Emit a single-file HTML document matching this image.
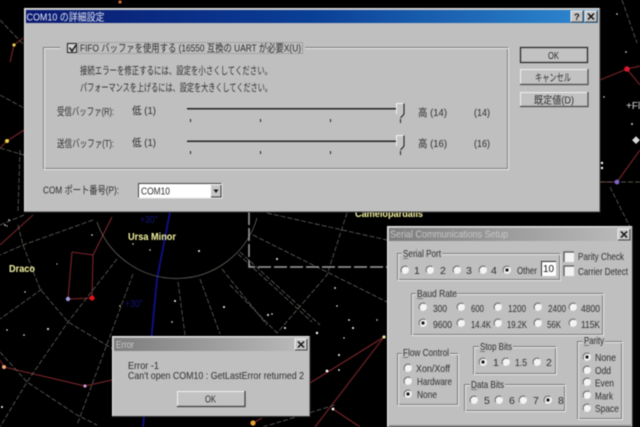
<!DOCTYPE html>
<html><head><meta charset="utf-8"><style>
html,body{margin:0;padding:0;background:#000;width:640px;height:427px;overflow:hidden}
svg{display:block;filter:blur(.45px)}
text{font-family:"Liberation Sans","Noto Sans CJK JP",sans-serif;font-size:10.5px;fill:#2e2e2e}
.l{fill:none;stroke:#7a242a;stroke-width:1.1}
.g{fill:none;stroke:#6e7068;stroke-width:.7;stroke-dasharray:5 2}
.y{fill:#f2f2a0;font-weight:bold;font-size:10.5px}
</style></head><body>
<svg width="640" height="427" viewBox="0 0 640 427" xmlns="http://www.w3.org/2000/svg">
<defs>
<linearGradient id="t1" x1="0" x2="1"><stop offset="0" stop-color="#0a1a70"/><stop offset=".5" stop-color="#0a3f96"/><stop offset="1" stop-color="#2f8ad0"/></linearGradient>
<linearGradient id="t2" x1="0" x2="1"><stop offset="0" stop-color="#7d7d7d"/><stop offset="1" stop-color="#bcbcbc"/></linearGradient>
<g id="r"><circle r="3.9" fill="#f4f4f4"/><path d="M-3.2 2.2A3.9 3.9 0 0 1 2.2-3.2" fill="none" stroke="#666" stroke-width="1.1"/></g>
<g id="rs"><circle r="3.9" fill="#f4f4f4"/><path d="M-3.2 2.2A3.9 3.9 0 0 1 2.2-3.2" fill="none" stroke="#666" stroke-width="1.1"/><circle r="1.6" fill="#111"/></g>
<g id="cb"><rect width="10" height="10" fill="#f2f2f2"/><path d="M0 10V0H10" fill="none" stroke="#555" stroke-width="1.3"/></g>
<g id="x"><rect width="12" height="11" fill="#c4c4c4"/><path d="M0 11V0H12" fill="none" stroke="#f2f2f2"/><path d="M0 11H12V0" fill="none" stroke="#444"/><path d="M3 2.5L9 8.5M9 2.5L3 8.5" stroke="#111" stroke-width="1.5"/></g>
<g id="th"><path d="M.5 .5H8V11L4.5 15L.5 11Z" fill="#c4c4c4"/><path d="M.5 11V.5H8" fill="none" stroke="#f2f2f2"/><path d="M8 .5V11L4.5 15" fill="none" stroke="#222" stroke-width="1.1"/></g>
</defs>
<rect width="640" height="427" fill="#000"/>
<g class="l">
<path d="M23 38L14 45L10 62M24 130L7 141L0 148M33 215L0 245M112 217L93 255M72 252L93 255L92 298L68 299L72 252"/>
<path d="M0 360L4 367L85 386L112 380M384 337L310 383M384 337L315 427M333 409L360 427M253 423L262 418"/>
<path d="M600 80L627 69L640 66M627 69L640 85M617 182L640 150M600 182L617 182"/>
</g>
<path d="M170 212L157 279L143 427" fill="none" stroke="#10108c" stroke-width="1.8"/>
<path d="M97 222A84 84 0 0 0 257 218" fill="none" stroke="#6e7068" stroke-width=".7"/>
<g class="g">
<path d="M117 259L68 322L27 382L0 427M133 274L77 425M178 282L185 335M200 279L220 334M222 269L267 325M238 254L312 322"/>
<path d="M18 225L23 245L40 289L68 322L113 349M93 220L23 245L0 255M42 289L0 319M0 352L27 382L77 415L97 425"/>
<path d="M253 235L387 302M267 213L387 240M347 213L327 275L277 333M230 285L277 333M240 252L320 325M622 0L637 43M610 187L630 227M600 182H640"/>
<path d="M0 20L24 45M0 95L24 108M0 148L24 155M20 150L18 212M24 215L0 225"/>
<path d="M263 427L335 405"/>
</g>
<path d="M249 212V267H388" fill="none" stroke="#a0a0a0" stroke-width="1.5" stroke-dasharray="13 3"/>
<g fill="#fff">
<circle cx="5" cy="225" r=".8"/><circle cx="92" cy="235" r=".8"/><circle cx="133" cy="244" r=".7"/><circle cx="150" cy="250" r=".7"/><circle cx="199" cy="251" r="1"/><circle cx="277" cy="259" r="1"/><circle cx="268" cy="315" r="1"/><circle cx="175" cy="301" r="1"/><circle cx="224" cy="307" r="1"/><circle cx="172" cy="322" r=".8"/><circle cx="48" cy="329" r="1"/><circle cx="7" cy="330" r=".8"/><circle cx="24" cy="335" r=".8"/><circle cx="25" cy="292" r=".7"/><circle cx="57" cy="264" r=".6"/><circle cx="335" cy="288" r=".9"/><circle cx="337" cy="306" r=".8"/><circle cx="272" cy="314" r=".8"/><circle cx="285" cy="328" r="1"/><circle cx="317" cy="333" r="1.2"/><circle cx="349" cy="320" r=".9"/><circle cx="353" cy="328" r="1"/><circle cx="377" cy="320" r=".7"/><circle cx="327" cy="371" r="1.4"/><circle cx="333" cy="409" r="1.4"/><circle cx="339" cy="370" r=".9"/><circle cx="2" cy="407" r="1"/><circle cx="339" cy="355" r="1"/><circle cx="344" cy="338" r=".7"/>
<circle cx="7" cy="226" r=".6"/><circle cx="617" cy="14" r=".8"/><circle cx="626" cy="52" r=".8"/><circle cx="604" cy="97" r=".7"/><circle cx="9" cy="220" r=".7"/><circle cx="602" cy="163" r="1.2"/><circle cx="602" cy="168" r="1.2"/><circle cx="632" cy="124" r=".9"/><circle cx="120" cy="306" r=".7"/>
</g>
<g fill="#f2d24a"><circle cx="14" cy="45" r="1.6"/><circle cx="7" cy="141" r="2"/></g>
<circle cx="120" cy="2" r="1.6" fill="#d8703a"/>
<circle cx="627" cy="69" r="2.8" fill="#d81830"/><circle cx="92" cy="298" r="2.6" fill="#e01020"/>
<circle cx="68" cy="299" r="2.2" fill="#9a9ae0"/><circle cx="617" cy="182" r="2.4" fill="#7a66c8"/>
<circle cx="4" cy="367" r="2" fill="#f0a878"/><circle cx="85" cy="386" r="1.6" fill="#c8a0d0"/>
<circle cx="253" cy="423" r="2.6" fill="#e8a030"/><circle cx="384" cy="337" r="1.6" fill="#f0e8a0"/>
<text x="9" y="272" class="y" textLength="26" lengthAdjust="spacingAndGlyphs">Draco</text>
<text x="128" y="240" class="y" textLength="48" lengthAdjust="spacingAndGlyphs">Ursa Minor</text>
<text x="355" y="217" class="y" textLength="68" lengthAdjust="spacingAndGlyphs">Camelopardalis</text>
<text x="140" y="223" style="fill:#14147c" textLength="18" lengthAdjust="spacingAndGlyphs">+30°</text>
<text x="125" y="307" style="fill:#14147c" textLength="18" lengthAdjust="spacingAndGlyphs">+30°</text>
<text x="626" y="109" style="fill:#d8d8d8;font-size:10px">+Fl</text>
<text x="632" y="143" style="fill:#d8d8d8;font-size:8px">◆l</text>

<rect x="24" y="8" width="576" height="204" fill="#bfbfbf"/>
<path d="M24.500 212V8.500H600" fill="none" stroke="#e4e4e4"/>
<path d="M24 212H600V8" fill="none" stroke="#3c3c3c"/>
<rect x="26" y="10" width="572" height="13" fill="url(#t1)"/>
<text x="26.500" y="20.500" style="fill:#e8e8f4" textLength="78" lengthAdjust="spacingAndGlyphs">COM10 の詳細設定</text>
<g transform="translate(571,11)"><rect width="12" height="11" fill="#c4c4c4"/><path d="M0 11V0H12" fill="none" stroke="#f2f2f2"/><path d="M0 11H12V0" fill="none" stroke="#444"/><text x="3" y="9" style="font-weight:bold;fill:#111;font-size:9.500px">?</text></g>
<use href="#x" x="585" y="11"/>
<rect x="43.500" y="47.500" width="464" height="121" fill="none" stroke="#7c7c7c"/>
<rect x="44.500" y="48.500" width="464" height="121" fill="none" stroke="#ececec"/>
<rect x="60" y="42" width="245" height="12" fill="#bfbfbf"/>
<rect x="67.500" y="43.500" width="9" height="9" fill="#d8d8d8" stroke="#333" stroke-width="1.200"/>
<path d="M69.500 47.500L72 51L76 45" fill="none" stroke="#111" stroke-width="1.500"/>
<rect x="78.500" y="42.500" width="224" height="11" fill="none" stroke="#555" stroke-width=".6" stroke-dasharray="1 1"/>
<text x="80" y="51.500" textLength="221" lengthAdjust="spacingAndGlyphs">FIFO バッファを使用する (16550 互換の UART が必要X(U)</text>
<text x="80" y="74" textLength="192" lengthAdjust="spacingAndGlyphs">接続エラーを修正するには、設定を小さくしてください。</text>
<text x="80" y="91" textLength="192" lengthAdjust="spacingAndGlyphs">パフォーマンスを上げるには、設定を大きくしてください。</text>
<text x="57" y="115" textLength="57" lengthAdjust="spacingAndGlyphs">受信バッファ(R):</text>
<text x="57" y="147" textLength="57" lengthAdjust="spacingAndGlyphs">送信バッファ(T):</text>
<text x="132" y="114" textLength="24" lengthAdjust="spacingAndGlyphs">低 (1)</text>
<text x="132" y="146" textLength="24" lengthAdjust="spacingAndGlyphs">低 (1)</text>
<g fill="#222">
<rect x="187" y="108" width="210" height="1.500"/><rect x="187" y="140.500" width="210" height="1.500"/>
<rect x="190" y="119" width="1" height="3"/><rect x="260" y="119" width="1" height="3"/><rect x="330" y="119" width="1" height="3"/><rect x="400" y="119" width="1" height="4"/>
<rect x="190" y="151" width="1" height="3"/><rect x="260" y="151" width="1" height="3"/><rect x="330" y="151" width="1" height="3"/><rect x="400" y="151" width="1" height="4"/>
</g>
<use href="#th" x="396" y="103"/><use href="#th" x="396" y="135"/>
<text x="418" y="116" textLength="29" lengthAdjust="spacingAndGlyphs">高 (14)</text>
<text x="474" y="116" textLength="16" lengthAdjust="spacingAndGlyphs">(14)</text>
<text x="418" y="147" textLength="29" lengthAdjust="spacingAndGlyphs">高 (16)</text>
<text x="474" y="147" textLength="16" lengthAdjust="spacingAndGlyphs">(16)</text>
<text x="43" y="193.500" textLength="76" lengthAdjust="spacingAndGlyphs">COM ポート番号(P):</text>
<rect x="138" y="183" width="84" height="15" fill="#fff"/>
<path d="M138.500 198V183.500H222" fill="none" stroke="#444"/>
<path d="M138 198H222V183" fill="none" stroke="#ececec"/>
<rect x="211" y="185" width="10" height="12" fill="#c4c4c4"/><path d="M211 197H221V185" fill="none" stroke="#333"/><path d="M213.500 189.500H218.500L216 193Z" fill="#111"/>
<text x="141" y="194.500" textLength="29" lengthAdjust="spacingAndGlyphs">COM10</text>
<rect x="520.500" y="47.500" width="67" height="15" fill="#c2c2c2" stroke="#222" stroke-width="1.200"/>
<text x="548" y="59" textLength="11" lengthAdjust="spacingAndGlyphs">OK</text>
<rect x="520" y="69" width="68" height="16" fill="#c2c2c2"/><path d="M520.500 85V69.500H588" fill="none" stroke="#f0f0f0"/><path d="M520 84.500H588V69" fill="none" stroke="#4a4a4a" stroke-width="1.200"/>
<text x="535" y="81" textLength="36" lengthAdjust="spacingAndGlyphs">キャンセル</text>
<rect x="520" y="92" width="68" height="15" fill="#c2c2c2"/><path d="M520.500 107V92.500H588" fill="none" stroke="#f0f0f0"/><path d="M520 106.500H588V92" fill="none" stroke="#4a4a4a" stroke-width="1.200"/>
<text x="534" y="103.500" textLength="40" lengthAdjust="spacingAndGlyphs">既定値(D)</text>

<rect x="112" y="336" width="198" height="81" fill="#bfbfbf"/>
<path d="M112.500 417V336.500H310" fill="none" stroke="#ececec"/>
<path d="M112 416.500H310V336" fill="none" stroke="#333"/>
<rect x="114" y="338" width="194" height="13" fill="url(#t2)"/>
<text x="116" y="348" style="fill:#c8c8c8" textLength="18" lengthAdjust="spacingAndGlyphs">Error</text>
<use href="#x" x="295" y="339"/>
<text x="128" y="369" textLength="31" lengthAdjust="spacingAndGlyphs">Error -1</text>
<text x="128" y="379" textLength="176" lengthAdjust="spacingAndGlyphs">Can't open COM10 : GetLastError returned 2</text>
<rect x="177" y="391" width="68" height="16" fill="#c2c2c2"/><path d="M177.500 407V391.500H245" fill="none" stroke="#f0f0f0"/><path d="M177 406.500H245V391" fill="none" stroke="#3c3c3c" stroke-width="1.200"/>
<text x="205" y="402.500" textLength="11" lengthAdjust="spacingAndGlyphs">OK</text>

<rect x="387" y="226" width="246" height="201" fill="#bfbfbf"/>
<path d="M387.500 427V226.500H633" fill="none" stroke="#ececec"/>
<path d="M632.500 226V427" stroke="#333"/>
<rect x="389" y="228" width="242" height="13" fill="url(#t2)"/>
<rect x="389" y="425" width="242" height="2" fill="#8c8c8c"/>
<text x="390" y="237.500" style="fill:#c8c8c8" textLength="118" lengthAdjust="spacingAndGlyphs">Serial Communications Setup</text>
<use href="#x" x="618" y="229"/>
<g fill="none" stroke="#7c7c7c">
<rect x="397.500" y="253.500" width="162" height="26"/><rect x="411.500" y="293.500" width="191" height="41"/><rect x="397.500" y="353.500" width="60" height="51"/><rect x="473.500" y="346.500" width="82" height="27"/><rect x="464.500" y="384.500" width="100" height="26"/><rect x="577.500" y="341.500" width="44" height="77"/>
</g>
<g fill="none" stroke="#e8e8e8">
<rect x="398.500" y="254.500" width="162" height="26"/><rect x="412.500" y="294.500" width="191" height="41"/><rect x="398.500" y="354.500" width="60" height="51"/><rect x="474.500" y="347.500" width="82" height="27"/><rect x="465.500" y="385.500" width="100" height="26"/><rect x="578.500" y="342.500" width="44" height="77"/>
</g>
<g fill="#bfbfbf"><rect x="402" y="250" width="40" height="8"/><rect x="416" y="290" width="42" height="8"/><rect x="402" y="350" width="48" height="8"/><rect x="479" y="343" width="34" height="8"/><rect x="470" y="381" width="35" height="8"/><rect x="583" y="338" width="22" height="8"/></g>
<text x="403" y="257" textLength="38" lengthAdjust="spacingAndGlyphs">Serial Port</text>
<text x="417" y="297" textLength="40" lengthAdjust="spacingAndGlyphs">Baud Rate</text>
<text x="403" y="356" textLength="46" lengthAdjust="spacingAndGlyphs">Flow Control</text>
<text x="480" y="350" textLength="32" lengthAdjust="spacingAndGlyphs">Stop Bits</text>
<text x="471" y="388" textLength="33" lengthAdjust="spacingAndGlyphs">Data Bits</text>
<text x="584" y="344" textLength="20" lengthAdjust="spacingAndGlyphs">Parity</text>
<path d="M403 258.500h5M417 298.500h6M403 357.500h5M480 351.500h5M471 389.500h6M584 345.500h5" stroke="#333" stroke-width=".6"/>
<use href="#r" x="405" y="270"/><use href="#r" x="430" y="270"/><use href="#r" x="457" y="270"/><use href="#r" x="483" y="270"/><use href="#rs" x="507" y="270"/>
<text x="414" y="274">1</text><text x="440" y="274">2</text><text x="466" y="274">3</text><text x="491" y="274">4</text><text x="517" y="274" textLength="20" lengthAdjust="spacingAndGlyphs">Other</text>
<rect x="541" y="261" width="15" height="15" fill="#fff"/><path d="M541.500 276V261.500H556" fill="none" stroke="#333"/>
<text x="543" y="272" style="fill:#111" textLength="11" lengthAdjust="spacingAndGlyphs">10</text>
<use href="#cb" x="564" y="252"/><use href="#cb" x="564" y="266"/>
<text x="578" y="260" textLength="46" lengthAdjust="spacingAndGlyphs">Parity Check</text>
<text x="578" y="275" textLength="50" lengthAdjust="spacingAndGlyphs">Carrier Detect</text>
<use href="#r" x="423" y="307"/><use href="#r" x="461" y="307"/><use href="#r" x="498" y="307"/><use href="#r" x="538" y="307"/><use href="#r" x="573" y="307"/>
<use href="#rs" x="423" y="323"/><use href="#r" x="461" y="323"/><use href="#r" x="498" y="323"/><use href="#r" x="538" y="323"/><use href="#r" x="573" y="323"/>
<text x="433" y="312" textLength="14" lengthAdjust="spacingAndGlyphs">300</text><text x="471" y="312" textLength="13" lengthAdjust="spacingAndGlyphs">600</text><text x="508" y="312" textLength="18" lengthAdjust="spacingAndGlyphs">1200</text><text x="548" y="312" textLength="18" lengthAdjust="spacingAndGlyphs">2400</text><text x="581" y="312" textLength="19" lengthAdjust="spacingAndGlyphs">4800</text>
<text x="433" y="328" textLength="19" lengthAdjust="spacingAndGlyphs">9600</text><text x="471" y="328" textLength="20" lengthAdjust="spacingAndGlyphs">14.4K</text><text x="507" y="328" textLength="20" lengthAdjust="spacingAndGlyphs">19.2K</text><text x="547" y="328" textLength="14" lengthAdjust="spacingAndGlyphs">56K</text><text x="581" y="328" textLength="19" lengthAdjust="spacingAndGlyphs">115K</text>
<use href="#r" x="408" y="368"/><use href="#r" x="408" y="381"/><use href="#rs" x="408" y="394"/>
<text x="416" y="372" textLength="34" lengthAdjust="spacingAndGlyphs">Xon/Xoff</text><text x="417" y="385" textLength="35" lengthAdjust="spacingAndGlyphs">Hardware</text><text x="417" y="398" textLength="20" lengthAdjust="spacingAndGlyphs">None</text>
<use href="#rs" x="483" y="362"/><use href="#r" x="506" y="362"/><use href="#r" x="537" y="362"/>
<text x="493" y="366">1</text><text x="515" y="366" textLength="12" lengthAdjust="spacingAndGlyphs">1.5</text><text x="546" y="366">2</text>
<use href="#r" x="474" y="400"/><use href="#r" x="499" y="400"/><use href="#r" x="523" y="400"/><use href="#rs" x="548" y="400"/>
<text x="484" y="404">5</text><text x="509" y="404">6</text><text x="533" y="404">7</text><text x="558" y="404">8</text>
<use href="#rs" x="587" y="357"/><use href="#r" x="587" y="370"/><use href="#r" x="587" y="382"/><use href="#r" x="587" y="395"/><use href="#r" x="587" y="408"/>
<text x="595" y="361" textLength="21" lengthAdjust="spacingAndGlyphs">None</text><text x="595" y="374" textLength="16" lengthAdjust="spacingAndGlyphs">Odd</text><text x="595" y="386.500" textLength="19" lengthAdjust="spacingAndGlyphs">Even</text><text x="595" y="399.500" textLength="18" lengthAdjust="spacingAndGlyphs">Mark</text><text x="595" y="412" textLength="24" lengthAdjust="spacingAndGlyphs">Space</text>
</svg>
</body></html>
